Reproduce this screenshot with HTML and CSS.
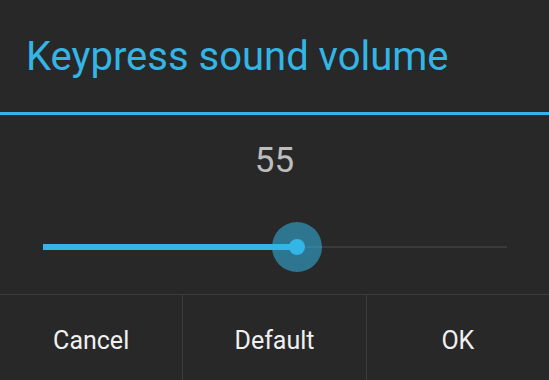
FILE: index.html
```html
<!DOCTYPE html>
<html>
<head>
<meta charset="utf-8">
<link rel="stylesheet" href="styles.css">
</head>
<body>
<div class="dialog">
  <div class="title">Keypress sound volume</div>
  <div class="divider"></div>
  <div class="content">
    <div class="value">55</div>
    <div class="slider">
      <div class="track"></div>
      <div class="fill" style="width: 54.7%"></div>
      <div class="thumb" style="left: 54.7%"><div class="dot"></div></div>
    </div>
  </div>
  <div class="buttons">
    <div class="btn">Cancel</div>
    <div class="btn">Default</div>
    <div class="btn">OK</div>
  </div>
</div>
</body>
</html>
```
FILE: styles.css
```css
html, body {
  margin: 0;
  padding: 0;
  background: #282828;
  height: 100%;
  overflow: hidden;
}
.dialog {
  display: flex;
  flex-direction: column;
  font-family: Roboto, "Noto Sans", sans-serif;
}
.title {
  box-sizing: border-box;
  height: 112px;
  padding: 37px 0 0 26px;
  font-size: 40px;
  line-height: 40px;
  color: #33b5e5;
}
.divider {
  height: 3px;
  background: #33b5e5;
}
.content {
  box-sizing: border-box;
  height: 179px;
  display: flex;
  flex-direction: column;
  align-items: center;
  padding-top: 28px;
}
.value {
  font-size: 35px;
  line-height: 35px;
  color: #bdbdbd;
}
.slider {
  position: relative;
  align-self: stretch;
  margin: 44px 42px 0 43px;
  height: 50px;
}
.track {
  position: absolute;
  left: 0;
  right: 0;
  top: 24px;
  height: 2px;
  background: #3a3a3a;
}
.fill {
  position: absolute;
  left: 0;
  top: 22px;
  height: 6px;
  background: #33b5e5;
}
.thumb {
  position: absolute;
  top: 0;
  width: 50px;
  height: 50px;
  margin-left: -25px;
  border-radius: 50%;
  background: rgba(51, 181, 229, 0.55);
  display: flex;
  align-items: center;
  justify-content: center;
}
.dot {
  width: 16px;
  height: 16px;
  border-radius: 50%;
  background: #33b5e5;
}
.buttons {
  display: flex;
  border-top: 1px solid #3c3c3c;
  height: 90px;
}
.btn {
  flex: 1;
  box-sizing: border-box;
  padding-top: 33px;
  text-align: center;
  font-size: 25px;
  line-height: 25px;
  color: #f0f0f0;
}
.btn + .btn {
  border-left: 1px solid #3c3c3c;
}
```
